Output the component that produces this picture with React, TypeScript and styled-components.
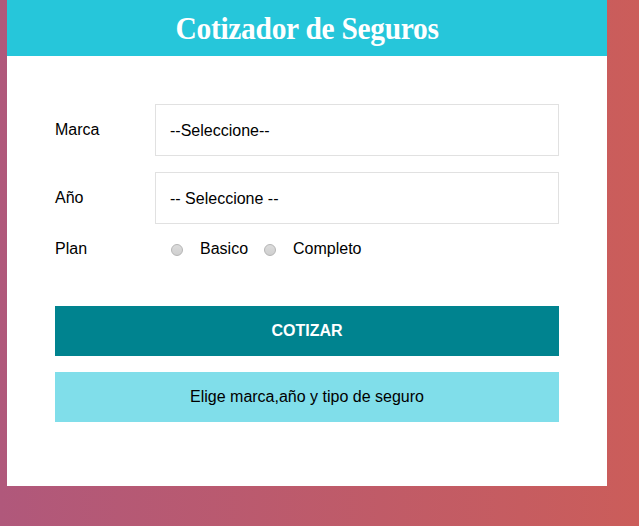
import { styled, createGlobalStyle } from 'styled-components';

const GlobalStyle = createGlobalStyle`
  * {
    box-sizing: border-box;
  }
  html,
  body {
    margin: 0;
    min-height: 100%;
  }
  body {
    min-height: 526px;
    background: linear-gradient(to right, #b0587b, #cb5d5a);
    font-family: 'Liberation Sans', Arial, sans-serif;
  }
`;

const App = () => {
  return (
    <>
      <GlobalStyle />
      <Container>
        <Header>
          <Title>Cotizador de Seguros</Title>
        </Header>
        <Form onSubmit={(e) => e.preventDefault()}>
          <Field>
            <Label htmlFor="marca">Marca</Label>
            <Select id="marca" defaultValue="">
              <option value="">--Seleccione--</option>
            </Select>
          </Field>
          <Field>
            <Label htmlFor="year">Año</Label>
            <Select id="year" defaultValue="">
              <option value="">-- Seleccione --</option>
            </Select>
          </Field>
          <Field $compact>
            <Label as="span">Plan</Label>
            <Radios>
              <Radio type="radio" name="plan" id="basico" value="basico" />
              <RadioLabel htmlFor="basico">Basico</RadioLabel>
              <Radio type="radio" name="plan" id="completo" value="completo" />
              <RadioLabel htmlFor="completo">Completo</RadioLabel>
            </Radios>
          </Field>
          <Button type="submit">COTIZAR</Button>
          <Message>Elige marca,año y tipo de seguro</Message>
        </Form>
      </Container>
    </>
  );
};

const Container = styled.div`
  width: 600px;
  margin-left: 7px;
  background-color: #fff;
`;

const Header = styled.header`
  height: 56px;
  background-color: #26c6da;
  display: flex;
  align-items: center;
  justify-content: center;
`;

const Title = styled.h1`
  margin: 0;
  color: #fff;
  font-family: 'Liberation Serif', 'Times New Roman', serif;
  font-weight: 700;
  font-size: 32px;
  letter-spacing: -0.3px;
  transform: scaleX(0.92);
`;

const Form = styled.form`
  padding: 48px 48px 64px;
  display: flex;
  flex-direction: column;
`;

const Field = styled.div<{ $compact?: boolean }>`
  display: flex;
  align-items: center;
  margin-bottom: ${({ $compact }) => ($compact ? '48px' : '16px')};
  height: ${({ $compact }) => ($compact ? '18px' : 'auto')};
`;

const Label = styled.label`
  flex: 0 0 100px;
  font-size: 16px;
  color: #000;
`;

const Select = styled.select`
  flex: 1;
  height: 52px;
  padding: 0 14px;
  border: 1px solid #e1e1e1;
  background-color: #fff;
  font-family: 'Liberation Sans', Arial, sans-serif;
  font-size: 16px;
  color: #000;
  appearance: none;
  border-radius: 0;
  outline: none;
`;

const Radios = styled.div`
  display: flex;
  align-items: center;
`;

const Radio = styled.input`
  appearance: none;
  width: 12px;
  height: 12px;
  margin: 2px 17px 0 16px;
  border-radius: 50%;
  border: 1px solid #b5b5b5;
  background: linear-gradient(to bottom, #dcdcdc, #cfcfcf);

  & + label + & {
    margin-left: 16px;
  }
`;

const RadioLabel = styled.label`
  font-size: 16px;
  color: #000;
`;

const Button = styled.button`
  height: 50px;
  border: none;
  background-color: #00838f;
  color: #fff;
  font-family: 'Liberation Sans', Arial, sans-serif;
  font-size: 16px;
  font-weight: 700;
  text-transform: uppercase;
  cursor: pointer;
`;

const Message = styled.div`
  margin-top: 16px;
  height: 50px;
  display: flex;
  align-items: center;
  justify-content: center;
  background-color: #80deea;
  font-size: 16px;
  color: #000;
`;

export default App;
